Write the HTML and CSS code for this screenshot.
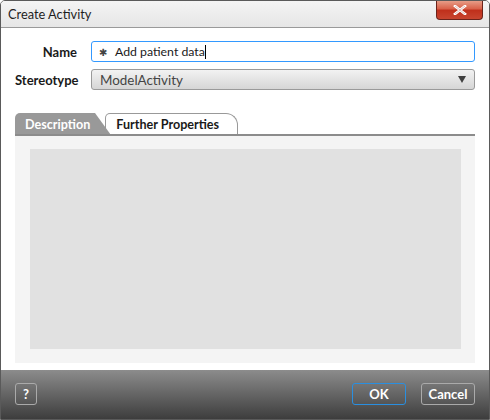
FILE: index.html
```html
<!DOCTYPE html>
<html>
<head>
<meta charset="utf-8">
<link rel="stylesheet" href="styles.css">
</head>
<body>
<div class="window">
  <div class="titlebar">
    <span class="title">Create Activity</span>
    <button class="close" aria-label="Close">
      <svg width="14" height="10" viewBox="0 0 14 10"><path d="M2 1 L12 9 M12 1 L2 9" stroke="#fff" stroke-width="2.6" stroke-linecap="square"/><path d="M2 1 L12 9 M12 1 L2 9" stroke="#8a2a20" stroke-width="0.6" fill="none" opacity="0.5"/></svg>
    </button>
  </div>
  <div class="content">
    <div class="form">
      <label class="label">Name</label>
      <div class="input"><span class="req">✱</span><span class="val">Add patient data</span><span class="caret"></span></div>
      <label class="label">Stereotype</label>
      <div class="select"><span>ModelActivity</span><span class="arrow"></span></div>
    </div>
    <div class="tabs">
      <div class="tab active">Description</div>
      <div class="tab">Further Properties</div>
    </div>
    <div class="panel">
      <div class="editor"></div>
    </div>
  </div>
  <div class="footer">
    <button class="btn help">?</button>
    <div class="spacer"></div>
    <button class="btn ok">OK</button>
    <button class="btn">Cancel</button>
  </div>
</div>
</body>
</html>
```
FILE: styles.css
```css
* { box-sizing: border-box; }
html, body { margin: 0; padding: 0; background: #fff; }
body { font-family: "Lato", "Open Sans", sans-serif; font-size: 13px; color: #1a1a1a; }
.window {
  width: 490px; height: 420px;
  border: 1px solid #5a5a5a;
  border-radius: 5px 5px 0 0;
  display: flex; flex-direction: column;
  overflow: hidden;
  background: #fff;
}
.titlebar {
  height: 27px; flex: none;
  background: linear-gradient(#f4f4f4, #e6e6e6);
  border-bottom: 1px solid #9a9a9a;
  display: flex; align-items: flex-start;
  position: relative;
}
.title { padding: 5px 0 0 7px; font-size: 12.8px; color: #1e1e1e; }
.close {
  position: absolute; right: 6px; top: -1px;
  width: 47px; height: 20px; padding: 0; margin: 0;
  border: 1px solid #6b231b; border-top: none;
  border-radius: 0 0 4px 4px;
  background: linear-gradient(#e9a48f 0%, #d9634b 45%, #c0301c 55%, #c8452f 100%);
  display: flex; align-items: center; justify-content: center;
}
.content { flex: 1; padding: 13px 14px 7px 14px; display: flex; flex-direction: column; }
.form {
  display: grid; grid-template-columns: 62px 1fr;
  column-gap: 14px; row-gap: 7px;
  align-items: center;
}
.label { text-align: right; font-weight: bold; font-size: 13px; }
.input {
  height: 21px; border: 1px solid #3399ff; border-radius: 3px;
  display: flex; align-items: center; padding-left: 7px;
}
.req { font-size: 10px; color: #444; width: 16px; }
.val { font-size: 12.3px; }
.caret { width: 1px; height: 14px; background: #000; }
.select {
  height: 21px; border: 1px solid #9a9a9a; border-radius: 3px;
  background: linear-gradient(#f2f2f2, #d6d6d6);
  display: flex; align-items: center; justify-content: space-between;
  padding: 0 8px; color: #444; font-size: 13.4px;
}
.arrow { width: 0; height: 0; border-left: 4px solid transparent; border-right: 4px solid transparent; border-top: 7px solid #404040; }
.tabs { display: flex; margin-top: 23px; height: 21px; align-items: flex-end; }
.tab {
  height: 21px; padding: 0 10px; font-weight: bold; font-size: 12.6px;
  display: flex; align-items: center;
  border-radius: 5px 5px 0 0;
}
.tab.active { background: #999; color: #fff; padding: 2px 20px 0 10px; clip-path: polygon(0 0, 84% 0, 100% 100%, 0 100%); }
.tab:not(.active) {
  border: 1px solid #999; border-bottom: none; background: #fff; margin-left: -5px;
  padding: 1px 18px 0 10px; border-radius: 5px 12px 0 0;
}
.panel {
  flex: 1; background: #f4f4f4; border-top: 2px solid #8c8c8c;
  padding: 13px 14px 14px 15px;
  display: flex;
}
.editor { flex: 1; background: #e1e1e1; }
.footer {
  height: 49px; flex: none;
  background: linear-gradient(#8c8c8c, #3d3d3d);
  display: flex; align-items: flex-start; padding: 13px 14px 0 14px; gap: 15px;
}
.spacer { flex: 1; }
.btn {
  height: 22px; min-width: 54px; border: 1px solid #aaa; border-radius: 3px;
  background: transparent; color: #fff; font-weight: bold; font-family: inherit; font-size: 13px;
  padding: 0 6px; margin: 0;
}
.btn.help { min-width: 22px; width: 22px; padding: 0; }
.btn.ok { border-color: #2a8fe0; }
```
